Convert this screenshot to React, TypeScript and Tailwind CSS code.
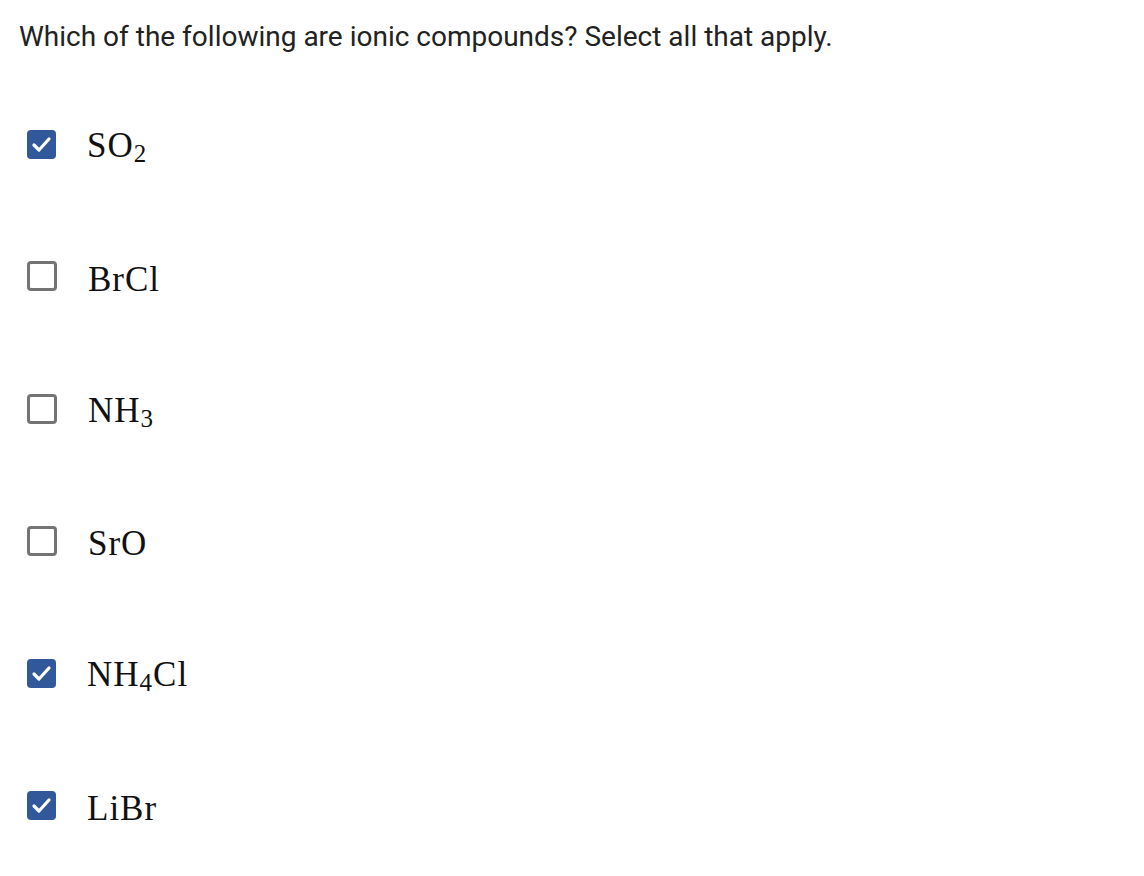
import React, { useState } from 'react';

type Choice = {
  id: string;
  parts: { text: string; sub?: boolean }[];
};

const choices: Choice[] = [
  { id: 'so2', parts: [{ text: 'SO' }, { text: '2', sub: true }] },
  { id: 'brcl', parts: [{ text: 'BrCl' }] },
  { id: 'nh3', parts: [{ text: 'NH' }, { text: '3', sub: true }] },
  { id: 'sro', parts: [{ text: 'SrO' }] },
  { id: 'nh4cl', parts: [{ text: 'NH' }, { text: '4', sub: true }, { text: 'Cl' }] },
  { id: 'libr', parts: [{ text: 'LiBr' }] },
];

const CheckBox: React.FC<{ checked: boolean }> = ({ checked }) =>
  checked ? (
    <span className="flex h-[29px] w-[29px] flex-shrink-0 items-center justify-center rounded-[4px] bg-[#30589a]">
      <svg viewBox="0 0 29 29" className="h-[29px] w-[29px]">
        <path d="M7 15 L12 20 L22 9" fill="none" stroke="#fff" strokeWidth="3.2" strokeLinecap="round" strokeLinejoin="round" />
      </svg>
    </span>
  ) : (
    <span className="h-[30px] w-[30px] flex-shrink-0 rounded-[4px] border-[3px] border-[#747474] bg-white" />
  );

export default function App() {
  const [selected, setSelected] = useState<Record<string, boolean>>({
    so2: true,
    nh4cl: true,
    libr: true,
  });

  const toggle = (id: string) => setSelected((s) => ({ ...s, [id]: !s[id] }));

  return (
    <div className="min-h-screen bg-white px-[19px] pt-[19px]" style={{ fontFamily: 'Roboto, "Noto Sans", sans-serif' }}>
      <p className="text-[28px] leading-[36px] text-[#222]">
        Which of the following are ionic compounds? Select all that apply.
      </p>

      <div className="mt-[74px] flex flex-col gap-[102.3px] pl-[8px]">
        {choices.map((c) => (
          <div key={c.id} onClick={() => toggle(c.id)} className="flex h-[30px] cursor-pointer items-center">
            <CheckBox checked={!!selected[c.id]} />
            <span
              className="ml-[31px] mt-[6px] text-[35px] leading-none tracking-[1px] text-[#111]"
              style={{ fontFamily: '"Liberation Serif", "DejaVu Serif", serif' }}
            >
              {c.parts.map((p, i) =>
                p.sub ? (
                  <span key={i} className="align-[-5px] text-[25px]">
                    {p.text}
                  </span>
                ) : (
                  <span key={i}>{p.text}</span>
                )
              )}
            </span>
          </div>
        ))}
      </div>
    </div>
  );
}
